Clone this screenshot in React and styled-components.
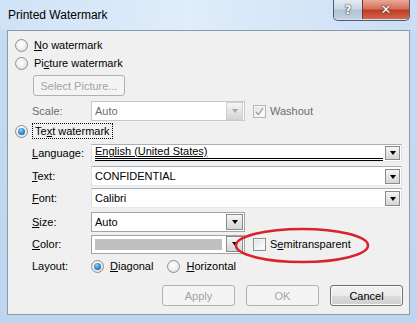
import React from "react";
import styled, { createGlobalStyle } from "styled-components";

const Global = createGlobalStyle`
  html, body {
    margin: 0;
    padding: 0;
    background: #c3d9f1;
  }
  body {
    font-family: "Liberation Sans", Arial, sans-serif;
    font-size: 11px;
    color: #000;
  }
  u {
    text-decoration: underline;
    text-underline-offset: 1px;
  }
`;

const Window = styled.div`
  position: relative;
  width: 417px;
  height: 323px;
  display: flex;
  flex-direction: column;
  background: linear-gradient(180deg, #d6e6f8 0px, #c5dbf3 30px, #bed5ef 100%);
  overflow: hidden;
`;

const TitleBar = styled.div`
  height: 30px;
  display: flex;
  align-items: flex-start;
  justify-content: space-between;
  background: linear-gradient(90deg, #cfe2f6 0%, #e0edfa 45%, #c9def4 100%);
`;

const Title = styled.div`
  padding: 8px 0 0 8px;
  font-size: 12px;
  line-height: 14px;
  color: #000;
`;

const Caption = styled.div`
  display: flex;
  margin-right: 7px;
  height: 20px;
  border: 1px solid #4d5b6b;
  border-top: none;
  border-radius: 0 0 5px 5px;
  overflow: hidden;
`;

const CapButton = styled.div`
  width: ${(p) => p.$w}px;
  height: 19px;
  display: flex;
  align-items: center;
  justify-content: center;
  font-family: "DejaVu Sans", sans-serif;
  font-weight: bold;
  font-size: ${(p) => (p.$close ? 13 : 12)}px;
  color: #fff;
  text-shadow: 0 0 2px #333, 0 0 1px #222;
  background: ${(p) =>
    p.$close
      ? "linear-gradient(180deg, #e9a999 0%, #d6705c 45%, #c13c22 55%, #d2674e 100%)"
      : "linear-gradient(180deg, #e3ebf4 0%, #cbd7e4 45%, #b2c2d4 55%, #c3d2e2 100%)"};
  border-left: ${(p) => (p.$close ? "1px solid #6b3a33" : "none")};
`;

const Client = styled.div`
  flex: 1;
  margin: 0 7px 8px 7px;
  background: #f0f0f0;
  border: 1px solid #8c99a8;
  display: flex;
  flex-direction: column;
  padding-top: 5px;
`;

const Row = styled.div`
  display: flex;
  align-items: center;
  height: ${(p) => p.$h}px;
  margin-top: ${(p) => p.$mt || 0}px;
  padding-left: ${(p) => (p.$indent ? 24 : 7)}px;
  color: ${(p) => (p.$disabled ? "#6d6d6d" : "#000")};
`;

const RadioWrap = styled.div`
  display: flex;
  align-items: center;
  gap: 6px;
  margin-right: ${(p) => p.$mr || 0}px;
`;

const RadioDot = styled.span`
  box-sizing: border-box;
  width: 13px;
  height: 13px;
  border-radius: 50%;
  border: 1px solid #8f8f8f;
  background: radial-gradient(circle at 45% 40%, #ffffff 0%, #f1f1f1 45%, #d4d4d4 100%);
  display: flex;
  align-items: center;
  justify-content: center;
  &::after {
    content: "";
    display: ${(p) => (p.$checked ? "block" : "none")};
    width: 7px;
    height: 7px;
    border-radius: 50%;
    background: radial-gradient(circle at 40% 35%, #8fd0fb 0%, #2f84c6 55%, #164f85 100%);
  }
`;

const Focus = styled.span`
  outline: 1px dotted #000;
  outline-offset: 1px;
  padding: 0 1px;
`;

const Label = styled.div`
  width: 59px;
  flex: none;
`;

const Field = styled.div`
  box-sizing: border-box;
  position: relative;
  width: ${(p) => p.$w}px;
  height: ${(p) => p.$h}px;
  background: #fff;
  border: 1px solid #abadb3;
  border-color: #abadb3 #dbdfe6 #e3e9ef #dbdfe6;
  display: flex;
  align-items: center;
  padding-left: 3px;
  color: ${(p) => (p.$disabled ? "#6d6d6d" : "#000")};
`;

const Combo = styled.div`
  box-sizing: border-box;
  width: ${(p) => p.$w}px;
  height: ${(p) => p.$h}px;
  background: #fff;
  border: 1px solid ${(p) => (p.$disabled ? "#c9c9c9" : "#a3a3a3")};
  display: flex;
  align-items: center;
  padding: 0 1px 0 3px;
  color: ${(p) => (p.$disabled ? "#6d6d6d" : "#000")};
`;

const ComboText = styled.div`
  flex: 1;
  align-self: stretch;
  display: flex;
  align-items: center;
`;

const LangText = styled.div`
  flex: 1;
  height: 13px;
  border-bottom: 3px double #000;
  text-decoration: underline;
  line-height: 12px;
  margin-right: 2px;
`;

const Swatch = styled.div`
  flex: 1;
  height: 11px;
  margin-right: 4px;
  background: #c0c0c0;
`;

const DropBtn = styled.div`
  box-sizing: border-box;
  flex: none;
  width: ${(p) => p.$w || 16}px;
  height: ${(p) => p.$h || 16}px;
  margin-right: ${(p) => p.$mr || 0}px;
  border: 1px solid ${(p) => (p.$disabled ? "#cfcfcf" : "#8a8a8a")};
  background: linear-gradient(180deg, #f6f6f6 0%, #e4e4e4 50%, #d6d6d6 100%);
  display: flex;
  align-items: center;
  justify-content: center;
  &::after {
    content: "";
    border-left: 3.5px solid transparent;
    border-right: 3.5px solid transparent;
    border-top: 4px solid ${(p) => (p.$disabled ? "#a8a8a8" : "#000")};
  }
`;

const FieldDrop = styled(DropBtn)`
  position: absolute;
  right: 1px;
  top: 2px;
`;

const Check = styled.span`
  box-sizing: border-box;
  width: 13px;
  height: 13px;
  border: 1px solid ${(p) => (p.$disabled ? "#b5b5b5" : "#8f8f8f")};
  background: linear-gradient(135deg, #dcdcdc 0%, #f4f4f4 60%, #ffffff 100%);
  box-shadow: inset 0 0 0 1px #f6f6f6;
  display: flex;
  align-items: center;
  justify-content: center;
  flex: none;
`;

const CheckWrap = styled.div`
  display: flex;
  align-items: center;
  gap: 4px;
  margin-left: 8px;
  color: ${(p) => (p.$disabled ? "#6d6d6d" : "#000")};
`;

const Button = styled.div`
  box-sizing: border-box;
  width: ${(p) => p.$w || 73}px;
  height: 21px;
  border: 1px solid ${(p) => (p.$disabled ? "#adb2b5" : "#707070")};
  border-radius: 3px;
  background: ${(p) =>
    p.$disabled
      ? "#f4f4f4"
      : "linear-gradient(180deg, #f2f2f2 0%, #ebebeb 50%, #dddddd 51%, #cfcfcf 100%)"};
  color: ${(p) => (p.$disabled ? "#a3a3a3" : "#000")};
  display: flex;
  align-items: center;
  justify-content: center;
  box-shadow: ${(p) => (p.$disabled ? "none" : "inset 0 0 0 1px #fcfcfc")};
`;

const PictureRow = styled.div`
  margin-top: 3px;
  padding-left: 25px;
  height: 21px;
  display: flex;
`;

const Footer = styled.div`
  display: flex;
  justify-content: flex-end;
  gap: 11px;
  margin-top: 9px;
  padding-right: 6px;
`;

const Ring = styled.svg`
  position: absolute;
  left: 234px;
  top: 227px;
  pointer-events: none;
`;

const Radio = ({ checked, children, mr, focus }) => (
  <RadioWrap $mr={mr}>
    <RadioDot $checked={checked} />
    {focus ? <Focus>{children}</Focus> : <span>{children}</span>}
  </RadioWrap>
);

const CheckBox = ({ disabled, checked, children }) => (
  <CheckWrap $disabled={disabled}>
    <Check $disabled={disabled}>
      {checked && (
        <svg width="9" height="9" viewBox="0 0 9 9">
          <path d="M1 5 L3.5 7.5 L8 1" fill="none" stroke="#9a9a9a" strokeWidth="1.3" />
        </svg>
      )}
    </Check>
    <span>{children}</span>
  </CheckWrap>
);

export default function App() {
  return (
    <>
      <Global />
      <Window>
        <TitleBar>
          <Title>Printed Watermark</Title>
          <Caption>
            <CapButton $w={28}>?</CapButton>
            <CapButton $w={46} $close>
              ✕
            </CapButton>
          </Caption>
        </TitleBar>
        <Client>
          <Row $h={18}>
            <Radio>
              <u>N</u>o watermark
            </Radio>
          </Row>
          <Row $h={18}>
            <Radio>
              Pi<u>c</u>ture watermark
            </Radio>
          </Row>
          <PictureRow>
            <Button $disabled $w={92}>
              Select Picture...
            </Button>
          </PictureRow>
          <Row $h={22} $mt={4} $indent $disabled>
            <Label>Scale:</Label>
            <Combo $w={154} $h={20} $disabled>
              <ComboText>Auto</ComboText>
              <DropBtn $disabled $w={17} $h={18} />
            </Combo>
            <CheckBox disabled checked>
              Washout
            </CheckBox>
          </Row>
          <Row $h={18}>
            <Radio checked focus>
              Te<u>x</u>t watermark
            </Radio>
          </Row>
          <Row $h={18} $mt={4} $indent>
            <Label>
              <u>L</u>anguage:
            </Label>
            <Field $w={311} $h={18}>
              <LangText>English (United States)</LangText>
              <DropBtn $w={15} $h={14} $mr={1} />
            </Field>
          </Row>
          <Row $h={20} $mt={4} $indent>
            <Label>
              <u>T</u>ext:
            </Label>
            <Field $w={311} $h={20}>
              CONFIDENTIAL
              <FieldDrop $w={15} $h={15} />
            </Field>
          </Row>
          <Row $h={20} $mt={2} $indent>
            <Label>
              <u>F</u>ont:
            </Label>
            <Field $w={311} $h={20}>
              Calibri
              <FieldDrop $w={15} $h={15} />
            </Field>
          </Row>
          <Row $h={21} $mt={3} $indent>
            <Label>
              <u>S</u>ize:
            </Label>
            <Combo $w={154} $h={20}>
              <ComboText>Auto</ComboText>
              <DropBtn $w={17} $h={16} />
            </Combo>
          </Row>
          <Row $h={20} $mt={2} $indent>
            <Label>
              <u>C</u>olor:
            </Label>
            <Combo $w={154} $h={19}>
              <Swatch />
              <DropBtn $w={17} $h={16} />
            </Combo>
            <CheckBox>
              S<u>e</u>mitransparent
            </CheckBox>
          </Row>
          <Row $h={20} $mt={2} $indent>
            <Label>Layout:</Label>
            <Radio checked mr={14}>
              <u>D</u>iagonal
            </Radio>
            <Radio>
              <u>H</u>orizontal
            </Radio>
          </Row>
          <Footer>
            <Button $disabled>Apply</Button>
            <Button $disabled>OK</Button>
            <Button>Cancel</Button>
          </Footer>
        </Client>
        <Ring width="136" height="37" viewBox="0 0 136 37">
          <ellipse
            cx="68"
            cy="18.5"
            rx="66"
            ry="16.5"
            fill="none"
            stroke="#d8232a"
            strokeWidth="2.5"
          />
        </Ring>
      </Window>
    </>
  );
}
